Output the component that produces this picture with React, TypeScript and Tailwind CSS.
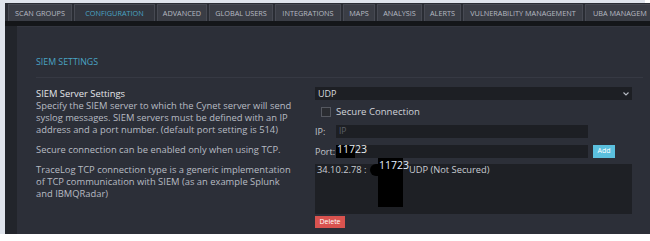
import React from 'react';

const tabs = [
  { label: 'SCAN GROUPS', w: 'w-[64px]' },
  { label: 'CONFIGURATION', w: 'w-[81px]', active: true },
  { label: 'ADVANCED', w: 'w-[50px]' },
  { label: 'GLOBAL USERS', w: 'w-[64px]' },
  { label: 'INTEGRATIONS', w: 'w-[66px]' },
  { label: 'MAPS', w: 'w-[32px]' },
  { label: 'ANALYSIS', w: 'w-[45px]' },
  { label: 'ALERTS', w: 'w-[37px]' },
  { label: 'VULNERABILITY MANAGEMENT', w: 'w-[120px]' },
  { label: 'UBA MANAGEM', w: 'w-[80px]' },
];

function TabBar() {
  return (
    <div className="flex h-[18px] gap-[2px] pl-[3px] overflow-hidden bg-[#2a2d34]">
      {tabs.map((t) => (
        <div
          key={t.label}
          className={`${t.w} shrink-0 flex items-center mt-[1px] border border-b-0 border-[#474a53] text-[7.3px] whitespace-nowrap ${
            t.active ? 'text-[#4aa4c4] bg-[#33363e] justify-center' : 'text-[#b6bac2] bg-[#3a3d45]'
          } ${t.label === 'UBA MANAGEM' ? 'justify-start pl-[7px]' : 'justify-center'}`}
        >
          {t.label}
        </div>
      ))}
    </div>
  );
}

function Field({ label, placeholder, children }: { label: string; placeholder?: string; children?: React.ReactNode }) {
  return (
    <div className="flex items-center h-[13px]">
      <span className="w-[21px] text-[9px] text-[#c3c6cc]">{label}</span>
      <div className="relative w-[252px] h-[13px] bg-[#1d1f24] text-[8.5px] text-[#5b5f68] pl-[3px] flex items-center">
        {placeholder}
        {children}
      </div>
    </div>
  );
}

export default function App() {
  return (
    <div className="w-[650px] h-[241px] bg-white" style={{ fontFamily: '"Open Sans", sans-serif' }}>
      <div className="w-[645px] h-[234px] bg-[#dfe4ec] pt-[3px] pl-[5px] flex">
        <div className="flex-1 flex flex-col bg-[#22252b]">
          <TabBar />
          <div className="h-[5px] bg-[#141619]" />
          <div className="flex-1 flex pl-[12px] pr-[3px]">
            <div className="flex-1 bg-[#2c2f38] px-[19px] pt-[18px] border-t border-[#33363f]">
              <div className="border-b border-[#363943] pt-[11px] pb-[9px]">
                <div className="text-[8.8px] leading-[12px] text-[#4aa4c4]">SIEM SETTINGS</div>
              </div>
              <div className="flex mt-[9px]">
                <div className="w-[279px] pt-[1px] text-[9.4px] leading-[12px] text-[#b7bbc3]">
                  <div className="w-[258px]">
                    <div className="text-[#e2e4e8]">SIEM Server Settings</div>
                    <p>
                      Specify the SIEM server to which the Cynet server will send syslog messages. SIEM servers
                      must be defined with an IP address and a port number. (default port setting is 514)
                    </p>
                    <p className="mt-[8px] whitespace-nowrap">Secure connection can be enabled only when using TCP.</p>
                    <p className="mt-[8px]">
                      TraceLog TCP connection type is a generic implementation of TCP communication with SIEM (as an
                      example Splunk and IBMQRadar)
                    </p>
                  </div>
                </div>
                <div className="w-[317px] flex flex-col">
                  <div className="h-[13px] bg-[#1d1f24] flex items-center justify-between px-[3px] text-[9px] text-[#d7d9de]">
                    <span>UDP</span>
                    <svg width="6" height="4" viewBox="0 0 6 4">
                      <path d="M0.5 0.5 L3 3 L5.5 0.5" stroke="#b7bbc3" strokeWidth="1.1" fill="none" />
                    </svg>
                  </div>
                  <div className="flex items-center h-[12px] mt-[6px] pl-[6px] gap-[5px]">
                    <div className="w-[10px] h-[10px] bg-[#2a2c31] border border-[#555860]" />
                    <span className="text-[9.6px] text-[#d0d3d8]">Secure Connection</span>
                  </div>
                  <div className="mt-[7px]">
                    <Field label="IP:" placeholder="IP" />
                  </div>
                  <div className="flex items-center mt-[7px] gap-[5px]">
                    <Field label="Port:">
                      <div className="absolute left-[0px] top-0 w-[19px] h-[13px] bg-black" />
                      <span className="absolute left-[1px] top-[-3px] text-[10.5px] text-[#e8ecf0]">11723</span>
                    </Field>
                    <button className="w-[22px] h-[13px] bg-[#5bc0de] text-white text-[7px] flex items-center justify-center">
                      Add
                    </button>
                  </div>
                  <div className="relative mt-[6px] h-[50px] bg-[#1e2025] px-[2px] text-[9.3px] leading-[12px] text-[#c9ccd2]">
                    <span>34.10.2.78 :</span>
                    <div className="absolute left-[55px] top-[0px] w-[10px] h-[12px] rounded-l-full bg-black" />
                    <div className="absolute left-[63px] top-[-6px] w-[25px] h-[49px] bg-black" />
                    <span className="absolute left-[64px] top-[-5px] text-[10.5px] text-[#e6f0ff]">11723</span>
                    <span className="absolute left-[94px] top-0">UDP (Not Secured)</span>
                  </div>
                  <div className="mt-[2px]">
                    <button className="w-[30px] h-[12px] bg-[#d9534f] text-white text-[7px] flex items-center justify-center">
                      Delete
                    </button>
                  </div>
                </div>
              </div>
            </div>
          </div>
        </div>
      </div>
    </div>
  );
}
